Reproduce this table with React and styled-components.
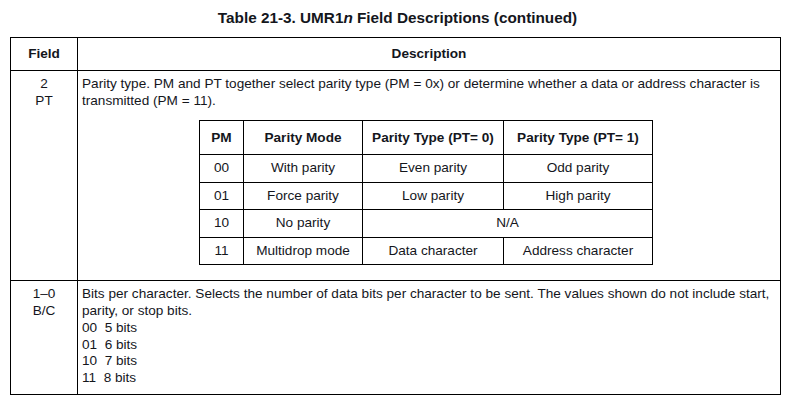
import styled, { createGlobalStyle } from "styled-components"

const GlobalStyle = createGlobalStyle`
body {
  margin: 0;
  background: #fff;
  font-family: "Liberation Sans", Arial, sans-serif;
  color: #14161c;
}
`

const Page = styled.div`
padding: 9px 0 0 10px;
width: 771px;
`

const Title = styled.div`
font-weight: 700;
font-size: 15.3px;
text-align: center;
height: 28px;
line-height: 18px;
padding-left: 4px;
`

const OuterTable = styled.table`
width: 771px;
border-collapse: collapse;
table-layout: fixed;
font-size: 13.6px;
line-height: 16.7px;
`

const HeadCell = styled.th`
border: 1px solid #000;
height: 32px;
padding: 0;
font-weight: 700;
text-align: center;
vertical-align: middle;
width: ${(p) => p.w || "auto"};
`

const FieldCell = styled.td`
border: 1px solid #000;
text-align: center;
vertical-align: top;
padding: 5px 4px 0;
`

const DescCell = styled.td`
border: 1px solid #000;
vertical-align: top;
padding: ${(p) => p.pad || "5px 4px 0 4px"};
`

const Line = styled.div`
white-space: nowrap;
`

const InnerTable = styled.table`
border-collapse: collapse;
table-layout: fixed;
margin: 11px 0 0 117px;
width: 450px;
`

const InnerHead = styled.th`
border: 1px solid #000;
height: 33px;
padding: 0;
font-weight: 700;
text-align: center;
white-space: nowrap;
width: ${(p) => p.w};
`

const InnerCell = styled.td`
border: 1px solid #000;
height: 26.5px;
padding: 0;
text-align: center;
white-space: nowrap;
`

const PARITY_ROWS = [
  ["00", "With parity", "Even parity", "Odd parity"],
  ["01", "Force parity", "Low parity", "High parity"],
  ["10", "No parity", "N/A"],
  ["11", "Multidrop mode", "Data character", "Address character"],
]

const BITS = ["00\u00a0\u00a05 bits", "01\u00a0\u00a06 bits", "10\u00a0\u00a07 bits", "11\u00a0\u00a08 bits"]

const ParityTable = () => (
  <InnerTable>
    <thead>
      <tr>
        <InnerHead w="43px">PM</InnerHead>
        <InnerHead w="118px">Parity Mode</InnerHead>
        <InnerHead w="140px">Parity Type (PT= 0)</InnerHead>
        <InnerHead w="148px">Parity Type (PT= 1)</InnerHead>
      </tr>
    </thead>
    <tbody>
      {PARITY_ROWS.map((row) => (
        <tr key={row[0]}>
          <InnerCell>{row[0]}</InnerCell>
          <InnerCell>{row[1]}</InnerCell>
          {row.length === 3 ? (
            <InnerCell colSpan={2}>{row[2]}</InnerCell>
          ) : (
            <>
              <InnerCell>{row[2]}</InnerCell>
              <InnerCell>{row[3]}</InnerCell>
            </>
          )}
        </tr>
      ))}
    </tbody>
  </InnerTable>
)

const App = () => {
  return (
    <Page>
      <GlobalStyle />
      <Title>
        Table 21-3. UMR1<i>n</i> Field Descriptions (continued)
      </Title>
      <OuterTable>
        <thead>
          <tr>
            <HeadCell w="66px">Field</HeadCell>
            <HeadCell>Description</HeadCell>
          </tr>
        </thead>
        <tbody>
          <tr>
            <FieldCell>
              <Line>2</Line>
              <Line>PT</Line>
            </FieldCell>
            <DescCell pad="5px 4px 15px 4px">
              <Line>
                Parity type. PM and PT together select parity type (PM = 0x) or determine whether a data or address character is
              </Line>
              <Line>transmitted (PM = 11).</Line>
              <ParityTable />
            </DescCell>
          </tr>
          <tr>
            <FieldCell>
              <Line>1–0</Line>
              <Line>B/C</Line>
            </FieldCell>
            <DescCell pad="5px 4px 7px 4px">
              <Line>
                Bits per character. Selects the number of data bits per character to be sent. The values shown do not include start,
              </Line>
              <Line>parity, or stop bits.</Line>
              {BITS.map((b) => (
                <Line key={b}>{b}</Line>
              ))}
            </DescCell>
          </tr>
        </tbody>
      </OuterTable>
    </Page>
  )
}

export default App
